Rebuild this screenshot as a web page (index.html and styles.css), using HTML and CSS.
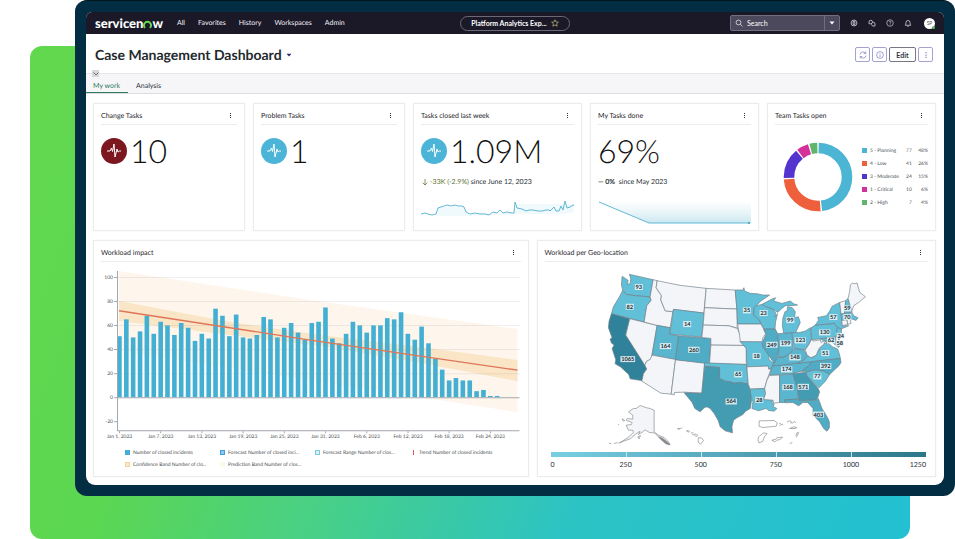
FILE: index.html
```html
<!DOCTYPE html>
<html lang="en">
<head>
<meta charset="utf-8">
<title>Case Management Dashboard</title>
<link rel="stylesheet" href="styles.css">
</head>
<body>
<div class="stage">
<div class="backdrop"></div>
<div class="device">
<div class="screen">

<header class="topbar">
  <div class="topbar-left">
    <a class="logo" href="#" aria-label="servicenow"><span>servicen</span><svg class="logo-o" viewBox="0 0 16 16"><path d="M3.6 14A6.3 6.3 0 1 1 12.400 14" fill="none" stroke="#62d84e" stroke-width="3.600"/></svg><span>w</span></a>
    <nav class="menu">
      <a href="#">All</a><a href="#">Favorites</a><a href="#">History</a><a href="#">Workspaces</a><a href="#">Admin</a>
    </nav>
  </div>
  <button class="pill" type="button">Platform Analytics Exp...
    <svg class="star" viewBox="0 0 16 16"><path d="M8 1.500l2 4.500 4.800.4-3.600 3.200 1.100 4.800L8 11.900l-4.300 2.500 1.100-4.800L1.200 6.400 6 6z" fill="none" stroke="#b9b779" stroke-width="1.500"/></svg>
  </button>
  <div class="topbar-right">
    <div class="search">
      <svg class="i8" viewBox="0 0 16 16"><g fill="none" stroke="#e8e8ee" stroke-width="1.500"><circle cx="7" cy="7" r="4.800"/><path d="M10.500 10.500L15 15"/></g></svg>
      <input type="text" placeholder="Search" aria-label="Search">
      <button type="button" aria-label="Search scope"><svg class="i6" viewBox="0 0 12 12"><path d="M1 3h10L6 9z" fill="#fff"/></svg></button>
    </div>
    <button class="tool" type="button" aria-label="Language"><svg class="i8" viewBox="0 0 16 16"><g fill="none" stroke="#dcdce4" stroke-width="1.300"><circle cx="8" cy="8" r="6"/><path d="M8 2v12M2 8h12M4.500 4q3.500 2 7 0M4.500 12q3.500-2 7 0"/></g></svg></button>
    <button class="tool" type="button" aria-label="Conversations"><svg class="i8" viewBox="0 0 16 16"><g fill="none" stroke="#dcdce4" stroke-width="1.500"><path d="M2 9.500V6a3.500 3.500 0 1 1 3.500 3.500z"/><path d="M9.500 6.500h1a3.500 3.500 0 0 1 3.500 3.500v4h-3.500A3.500 3.500 0 0 1 7 10.500"/></g></svg></button>
    <button class="tool" type="button" aria-label="Help"><svg class="i8" viewBox="0 0 16 16"><g fill="none" stroke="#dcdce4" stroke-width="1.300"><circle cx="8" cy="8" r="6.500"/><path d="M6 6.300a2 2 0 1 1 2.800 1.900Q8 8.600 8 9.500M8 11v1.300"/></g></svg></button>
    <button class="tool" type="button" aria-label="Notifications"><svg class="i8" viewBox="0 0 16 16"><g fill="none" stroke="#dcdce4" stroke-width="1.500"><path d="M2.500 12.500Q4 11 4 7a4 4 0 0 1 8 0q0 4 1.500 5.500z"/><path d="M6.500 14.500h3"/></g></svg></button>
    <button class="avatar" type="button">SP<i></i></button>
  </div>
</header>

<div class="titlebar">
  <h1>Case Management Dashboard</h1>
  <svg class="i6" viewBox="0 0 12 12"><path d="M1 3.500h10L6 9z" fill="#2c2a70"/></svg>
  <div class="actions">
    <button type="button" aria-label="Refresh"><svg class="i8" viewBox="0 0 16 16"><g fill="none" stroke="#7a78c0" stroke-width="1.400"><path d="M2 7a6 6 0 0 1 11-2.500M14 9a6 6 0 0 1-11 2.500"/><path d="M13.500 1v4h-4M2.500 15v-4h4"/></g></svg></button>
    <button type="button" aria-label="Information"><svg class="i8" viewBox="0 0 16 16"><g fill="none" stroke="#7a78c0" stroke-width="1.400"><circle cx="8" cy="8" r="6.800"/><path d="M8 7v5M8 4v1.500"/></g></svg></button>
    <button class="edit" type="button">Edit</button>
    <button type="button" aria-label="More actions"><svg class="i8" viewBox="0 0 16 16"><path d="M7 2h2v2.500H7zM7 6.800h2v2.500H7zM7 11.500h2V14H7z" fill="#6a68b0"/></svg></button>
  </div>
</div>

<nav class="tabs">
  <button class="collapse" type="button" aria-label="Collapse"><svg class="i6" viewBox="0 0 12 12"><path d="M1 3l5 5 5-5" fill="none" stroke="#55555f" stroke-width="1.600"/></svg></button>
  <a class="tab active" href="#">My work</a><a class="tab" href="#">Analysis</a>
</nav>

<main class="board">
  <section class="card">
    <header><h2>Change Tasks</h2><button type="button" aria-label="Options"></button></header>
    <div class="score"><svg class="pulse red" viewBox="0 0 26 26"><circle cx="13" cy="13" r="13"/><path d="M6 13h3l1.500-3 1 3.500L13 6l1 13 2-8 1 3 1.500-1H20"/></svg><span>10</span></div>
  </section>
  <section class="card">
    <header><h2>Problem Tasks</h2><button type="button" aria-label="Options"></button></header>
    <div class="score"><svg class="pulse" viewBox="0 0 26 26"><circle cx="13" cy="13" r="13"/><path d="M6 13h3l1.500-3 1 3.500L13 6l1 13 2-8 1 3 1.500-1H20"/></svg><span>1</span></div>
  </section>
  <section class="card wide">
    <header><h2>Tasks closed last week</h2><button type="button" aria-label="Options"></button></header>
    <div class="score"><svg class="pulse" viewBox="0 0 26 26"><circle cx="13" cy="13" r="13"/><path d="M6 13h3l1.500-3 1 3.500L13 6l1 13 2-8 1 3 1.500-1H20"/></svg><span>1.09M</span></div>
    <p class="delta"><svg class="i8" viewBox="0 0 16 16"><path d="M8 2v12M3.500 9.500L8 14l4.500-4.500" fill="none" stroke="#5d7030" stroke-width="1.500"/></svg><span class="good">-33K (-2.9%)</span> since June 12, 2023</p>
    <svg class="spark" viewBox="0 0 153 26">
      <defs><linearGradient id="fade" x1="0" y1="0" x2="0" y2="1"><stop offset="0" stop-color="#bfe3ee" stop-opacity="0"/><stop offset="1" stop-color="#a9d9e6" stop-opacity=".6"/></linearGradient></defs>
      <path d="M17 8l8-1h18l3 7 46-1 3-9 58 0v8l-10 2H95l-50 2H17z" fill="#d3edf4" opacity=".35"/>
      <path d="M0 14l4-1 3 1 4 1 4-1 2-6 3-1 3-1 3-1 4 1 4-1 3 1 4 0 2 1 2 5 4 2 5-1 5 1 5 0 4 1 4-3 4 1 3-3 3 3 4-1 5 1 2 0 1-11 2 6 5 1 4 2 3-1 4 0 5 1 4 0 4-1 3 0 1 1 4-4 2 4 3 0 2-5 2 4 2-9 2 7 3-1 3-2 4 1 3 1 2 1" fill="none" stroke="#62b8d6"/>
    </svg>
  </section>
  <section class="card wide">
    <header><h2>My Tasks done</h2><button type="button" aria-label="Options"></button></header>
    <div class="score"><span>69%</span></div>
    <p class="delta"><b>— 0%</b>&nbsp; since May 2023</p>
    <svg class="spark" viewBox="0 0 153 26">
      <path d="M0 1h153v22H51z" fill="url(#fade)"/>
      <path d="M1 2l50 21h101" fill="none" stroke="#62b8d6"/><circle cx="151" cy="23" r="1" fill="#3a98bd"/>
    </svg>
  </section>
  <section class="card wide">
    <header><h2>Team Tasks open</h2><button type="button" aria-label="Options"></button></header>
    <div class="team">
      <svg class="donut" viewBox="0 0 70 70" id="donut"></svg>
      <table>
        <tr><th scope="row"><i class="sw c1"></i>5 - Planning</th><td>77</td><td>48%</td></tr>
        <tr><th scope="row"><i class="sw c2"></i>4 - Low</th><td>41</td><td>26%</td></tr>
        <tr><th scope="row"><i class="sw c3"></i>3 - Moderate</th><td>24</td><td>15%</td></tr>
        <tr><th scope="row"><i class="sw c4"></i>1 - Critical</th><td>10</td><td>6%</td></tr>
        <tr><th scope="row"><i class="sw c5"></i>2 - High</th><td>7</td><td>4%</td></tr>
      </table>
    </div>
  </section>
</main>

<div class="board lower">
  <section class="card">
    <header><h2>Workload impact</h2><button type="button" aria-label="Options"></button></header>
    <svg class="chart" viewBox="101 262 419 180">
      <path d="M119 271L310 300L517 329V412L310 380L119 351z" fill="#fef6ed"/>
      <path d="M119 301L230 322L320 335L420 347L517 360V381L420 363L320 346L230 335L119 321z" fill="#fae5c6"/>
      <path d="M117 277.500H520M117 301.500H520M117 325.500H520M117 349.500H520M117 373.500H520" stroke="#00000010"/>
      <g id="bars" fill="#43b0d3"></g>
      <path d="M119 310.700L310 340L517 370" fill="none" stroke="#df7558" stroke-width="1.300"/>
      <path d="M117.500 271V431M114 277.500h3M114 301.500h3M114 325.500h3M114 349.500h3M114 373.500h3M114 397.500H519M114 421.500h3M117 430.500H519" fill="none" stroke="#a3a8ad"/>
      <g id="axis"></g>
    </svg>
    <ul class="legend">
      <li><i class="sw solid"></i>Number of closed incidents</li>
      <li><i class="sw forecast"></i>Forecast Number of closed inci...</li>
      <li><i class="sw range"></i>Forecast Range Number of clos...</li>
      <li><i class="sw trend"></i>Trend Number of closed incidents</li>
      <li><i class="sw confidence"></i>Confidence Band Number of clo...</li>
      <li><i class="sw prediction"></i>Prediction Band Number of clos...</li>
    </ul>
  </section>
  <section class="card">
    <header><h2>Workload per Geo-location</h2><button type="button" aria-label="Options"></button></header>
    <svg class="map" viewBox="-135 -3 1149 555">
      <g id="states" stroke="#6f7f88" stroke-width="2" stroke-linejoin="round"></g>
      <g fill="#fff" stroke="#85888d" stroke-width="2">
        <path fill="#f4f5f9" d="M115 440L130 430 138 430 150 421 170 428 180 430 192 435V500L205 510 222 517 235 530 240 538 228 534 205 514 192 503 178 502 165 494 158 500 145 508 150 498 135 508 122 520 90 532 112 518 130 502 128 495 115 495 108 480 124 478 126 472 108 465 112 460 128 462 128 450z"/>
        <path d="M57 534l6 1M72 535l10-3M84 534l8-2M96 461l8 5-4 2zM84 478h3M143 515l8-4-4 10z"/>
        <path d="M205 515l12 4 18 14 3 6-12-4-16-14z" fill="#85888d"/>
        <path d="M262 491l5-2 2 3zM270 490l6-2M289 497l5-1 4 3-4 2zM302 503h8M306 508l4 1M311 508l7-2 5 5-6 3zM324 518l10 0 6 8-9 11-7-6z"/>
        <path d="M507 467l45-1 9 7-3 10-40 4-12-4zM566 476l5-2M568 482l8-6 2 4M590 471l8-4 6 3M600 473h8l4-4 5 3M598 490l12-5 10 2-5 3zM505 515l15-12 10 2-8 10-4 13-12 5-3-8zM545 525l12-3 4-5 16-1-8 7-10 2-5 5zM617 512l2-8 6-3-3 8-4 8M598 535l8-3"/>
      </g>
      <g id="tags"></g>
    </svg>
    <div class="ramp"><i></i><i></i><i></i><i></i><i></i></div>
    <div class="ramp-labels"><span>0</span><span>250</span><span>500</span><span>750</span><span>1000</span><span>1250</span></div>
  </section>
</div>

</div>
</div>
</div>
<script src="charts.js"></script>
</body>
</html>
```
FILE: styles.css
```css
* { box-sizing: border-box; }
body { margin: 0; background: #fff; color: #2b3238; font: 7px/10px Lato, "Open Sans", sans-serif; text-rendering: geometricPrecision; }
a { color: inherit; text-decoration: none; }
button { font: inherit; color: inherit; background: none; border: 0; padding: 0; display: flex; align-items: center; justify-content: center; }
h1, h2, p, ul { margin: 0; padding: 0; font-weight: 400; }
h2 { font-size: 7px; line-height: 10px; color: #1f262b; }
svg { display: block; flex: none; }
.i8 { width: 8px; height: 8px; }
.i6 { width: 6px; height: 6px; }

.stage { position: relative; min-height: 100vh; padding: 0 0 43px 75px; }
.backdrop { position: absolute; inset: 46px 45px 0 30px; border-radius: 12px; background: linear-gradient(110deg, #62d84e 0%, #5cd751 22%, #48d086 43%, #2cc3c4 67%, #22c0d2 100%); }
.device { position: relative; padding: 11px; border-radius: 12px; background: #032d42; border-top: 1px solid #021620; }
.screen { border-radius: 6px 6px 9px 9px; overflow: hidden; background: #fff; padding-bottom: 8px; }

.topbar { display: grid; grid-template-columns: 1fr auto 1fr; align-items: center; height: 22px; padding: 0 9px; background: #1b1828; color: #f0f0f4; }
.topbar-left, .menu, .topbar-right { display: flex; align-items: center; }
.logo { display: flex; align-items: center; font-size: 13px; line-height: 16px; font-weight: 900; color: #fff; margin-right: 14px; }
.logo-o { width: 9px; height: 9px; margin-top: 3px; }
.menu { gap: 13px; }
.pill { width: 110px; height: 15px; gap: 4px; border: 1px solid #6b6878; border-radius: 8px; font-weight: 700; color: #fff; white-space: nowrap; }
.star { width: 8px; height: 8px; }
.topbar-right { justify-content: flex-end; gap: 10px; }
.search { display: flex; align-items: center; width: 110px; height: 16px; background: #4c495c; border: 1px solid #716e80; border-radius: 2px; padding-left: 4px; }
.search input { flex: 1; min-width: 0; height: 14px; padding: 0 4px; border: 0; background: none; color: #fff; font: inherit; outline: 0; }
.search input::placeholder { color: #fff; opacity: 1; }
.search button { width: 15px; height: 14px; border-left: 1px solid #716e80; }
.avatar { position: relative; width: 11px; height: 11px; margin-left: 2px; border-radius: 50%; background: #fff; color: #555; font-size: 5px; }
.avatar i { position: absolute; right: 0; bottom: 0; width: 3px; height: 3px; border-radius: 50%; background: #5fb85f; }

.titlebar { display: flex; align-items: center; gap: 4px; height: 39px; padding: 2px 11px 0 9px; }
h1 { font-size: 14px; line-height: 20px; font-weight: 700; color: #1f2a2e; }
.actions { display: flex; gap: 2px; margin-left: auto; }
.actions button { width: 15px; height: 15px; border: 1px solid #a3a2d2; border-radius: 2px; }
.actions .edit { width: 27px; border-color: #77777f; font-weight: 700; }

.tabs { position: relative; display: flex; height: 21px; background: #f6f6f9; border-top: 1px solid #e6e6ea; border-bottom: 1px solid #dcdce0; }
.tab { padding: 7px 8px 0 8px; }
.active { padding-left: 7px; color: #2f7d5b; border-bottom: 1px solid #2f7d5b; }
.collapse { position: absolute; left: 6px; top: -4px; width: 7px; height: 7px; background: #d8d8dc; }

.board { display: grid; grid-template-columns: 152fr 152fr 169fr 169fr 169fr; gap: 8px; padding: 9px 8px 0 7px; }
.lower { grid-template-columns: 435fr 399fr; }
.card { min-width: 0; min-height: 128px; padding: 0 7px; background: #fff; border: 1px solid #ececee; box-shadow: 0 0 1px #e4e4e8; }
.card header { display: flex; align-items: center; justify-content: space-between; height: 21px; padding-top: 3px; border-bottom: 1px solid #ececee; }
.card header button { width: 14px; height: 10px; }
.card header button::before { content: ""; width: 1px; height: 1px; background: #33383c; box-shadow: 0 -2px #33383c, 0 2px #33383c; }
.score { display: flex; align-items: center; gap: 3px; height: 26px; margin-top: 13px; font-size: 32px; line-height: 26px; font-weight: 300; color: #111; }
.pulse { width: 26px; height: 26px; fill: #4cb4d6; }
.pulse path { fill: none; stroke: #fff; stroke-width: 1; stroke-linejoin: round; }
.pulse.red { fill: #7c161f; }
.delta { display: flex; align-items: center; height: 10px; margin-top: 13px; white-space: pre; }
.delta .i8 { margin-right: 1px; }
.good { color: #5d7030; }
.spark { width: 100%; margin-top: 13px; }
.team { display: flex; align-items: center; gap: 9px; margin-top: 17px; padding-left: 8px; }
.donut { flex: 0 0 70px; width: 70px; }
table { flex: 1; border-collapse: collapse; font-size: 5px; line-height: 13px; color: #4b4f53; }
th, td { padding: 0; font-weight: 400; text-align: right; white-space: nowrap; }
td + td { padding-left: 4px; }
th { text-align: left; }
.sw { display: inline-block; width: 5px; height: 5px; margin-right: 3px; vertical-align: middle; }
.c1 { background: #4db5d4; } .c2 { background: #ee5f3c; } .c3 { background: #5334cf; } .c4 { background: #d4309b; } .c5 { background: #61b46b; }

.lower .card { min-height: 237px; }
.chart, .map { width: 100%; }
.chart text { font-size: 5px; fill: #4b4f53; }
.legend { display: grid; grid-template-columns: 95px 95px 96px auto; justify-content: start; row-gap: 2px; padding: 6px 0 0 24px; list-style: none; font-size: 5px; color: #4b4f53; white-space: nowrap; }
.solid { background: #43b0d3; }
.forecast { background: #8cc7ee; border: 1px solid #3f9ed8; }
.range { background: #d9f0f7; border: 1px solid #7cc9e2; }
.trend { width: 1px; margin-left: 2px; margin-right: 5px; background: #e05565; }
.confidence { background: #fce9c9; border: 1px solid #f3d49c; }
.prediction { background: #fdf8ea; }
.map { margin-top: 2px; }
.map text { font-size: 17px; font-weight: 700; fill: #1d2b33; text-anchor: middle; }
.ramp { display: grid; grid-template-columns: repeat(5, 1fr); height: 5px; margin: 3px 2px 0 6px; background: linear-gradient(90deg, #78cfe4, #2c7689); }
.ramp i + i { border-left: 1px solid #c5e4ec; }
.ramp-labels { display: flex; padding: 3px 2px 0 6px; text-align: center; }
.ramp-labels span { flex: 2 0 0; }
.ramp-labels span:first-child { flex-grow: 1; text-align: left; }
.ramp-labels span:last-child { flex-grow: 1; text-align: right; }
```
FILE: charts.js
```js
const NS = "http://www.w3.org/2000/svg";
function add(parent, tag, attrs, text) {
  const el = document.createElementNS(NS, tag);
  for (const key in attrs) el.setAttribute(key, attrs[key]);
  if (text !== undefined) el.textContent = text;
  parent.appendChild(el);
}
const byId = id => document.getElementById(id);

// Daily closed incidents
const closed = [51,65,50,55,68,53,63,60,52,62,58,47,53,49,74,68,51,69,50,49,52,67,65,50,58,62,54,48,62,63,75,49,45,53,63,60,54,60,60,66,65,71,53,48,59,45,32,23,14,16,14,14,5,6,1,1];
const step = 6.86;
closed.forEach((v, i) => add(byId("bars"), "rect", {
  x: (117.1 + i * step).toFixed(1), y: (397 - v * 1.195).toFixed(1), width: 4.6, height: (v * 1.195).toFixed(1)
}));
["Jan 1, 2023","Jan 7, 2023","Jan 13, 2023","Jan 19, 2023","Jan 25, 2023","Jan 31, 2023","Feb 6, 2023","Feb 12, 2023","Feb 18, 2023","Feb 24, 2023"].forEach((d, i) => {
  const x = 119.5 + i * step * 6;
  add(byId("axis"), "path", { d: `M${x} 431v2`, stroke: "#a3a8ad" });
  add(byId("axis"), "text", { x, y: 438, "text-anchor": "middle" }, d);
});
[100, 80, 60, 40, 20, 0, -20].forEach((v, i) =>
  add(byId("axis"), "text", { x: 113, y: 279 + i * 24, "text-anchor": "end" }, v));

// Team tasks ring
let offset = 0;
[[48.4, "#4db5d4"], [25.8, "#ee5f3c"], [15.1, "#5334cf"], [6.3, "#d4309b"], [4.4, "#61b46b"]].forEach(([share, color]) => {
  add(byId("donut"), "circle", { cx: 35, cy: 35, r: 29, fill: "none", stroke: color, "stroke-width": 10.6, pathLength: 100,
    "stroke-dasharray": `${share - 0.7} ${100.7 - share}`, "stroke-dashoffset": -offset - 0.35, transform: "rotate(-90 35 35)" });
  offset += share;
});

// State outlines with fill shades
const W = "#f4f5f9", A = "#62bfd8", B = "#5ab6cf", C = "#50abc4", D = "#449cb3", E = "#2f8299";
[
 [A,"96 34 114 46 112 58 120 56 122 42 118 28 189 44 180 95 135 92 108 88 98 76 94 60"],
 [A,"98 76 108 88 135 92 180 96 183 106 170 122 162 171 64 146 70 125 88 95"],
 [E,"64 146 119 161 107 210 164 300 170 312 160 326 158 347 120 341 116 328 105 318 92 306 75 296 77 284 66 250 72 240 64 234 60 222 66 218 55 188 57 168"],
 [W,"119 161 201 181 183 283 170 288 164 300 107 210"],
 [W,"189 44 201 47 198 68 214 92 212 105 225 137 248 140 240 188 201 181 162 171 170 122 183 106 180 95"],
 [W,"201 47 270 61 348 70 341 144 250 133 248 140 225 137 212 105 214 92 198 68"],
 [A,"250 133 341 144 335 216 239 207"],
 [B,"201 181 240 188 238 207 265 212 256 284 186 270"],
 [W,"186 270 256 283 243 387 212 384 155 348 160 326 170 312 164 300 170 288 180 283"],
 [W,"256 283 343 293 335 384 282 381 253 382 252 389 243 387"],
 [C,"265 212 362 220 358 296 256 284"],
 [W,"348 70 435 75 440 132 343 128"],
 [W,"343 128 440 132 441 190 430 186 415 182 339 180"],
 [W,"339 180 415 182 441 190 455 220 460 241 362 240 362 220 335 217"],
 [W,"362 240 462 241 468 250 468 298 358 296"],
 [A,"343 293 468 298 472 330 474 358 450 352 432 354 420 350 405 348 388 340 388 307 343 304"],
 [D,"343 304 388 307 388 340 405 348 420 350 432 354 450 352 475 357 482 385 484 405 480 430 466 438 458 448 440 458 430 465 425 485 427 503 405 497 390 485 384 466 372 445 360 430 350 425 342 428 330 440 314 430 306 412 282 383 335 384"],
 [A,"435 75 458 75 461 68 463 78 480 85 500 86 518 90 538 90 512 108 498 122 492 128 490 150 508 165 512 177 442 177 440 132"],
 [A,"498 122 515 118 525 124 548 132 557 145 553 156 562 146 556 170 554 192 522 192 512 177 508 165 490 150 492 128"],
 [W,"442 177 512 177 520 192 527 205 518 218 515 232 450 230 448 210"],
 [A,"450 230 514 230 520 250 535 268 536 283 550 295 545 310 535 310 534 303 470 305 468 250"],
 [W,"470 305 534 303 535 312 542 312 530 345 523 370 480 372 474 358"],
 [A,"480 372 523 370 526 385 520 403 548 405 545 412 552 417 548 424 560 430 552 438 535 436 528 430 520 432 505 437 485 430 488 410 482 390"],
 [W,"538 330 568 330 568 412 550 414 548 405 520 403 526 385 523 370 530 345"],
 [B,"568 330 608 326 622 372 624 402 583 404 585 412 568 412"],
 [D,"608 326 648 321 650 332 682 368 688 380 682 398 678 405 626 406 622 372"],
 [C,"583 404 624 402 626 406 678 405 684 400 695 430 712 458 717 470 717 488 710 498 700 490 688 470 680 462 668 450 668 430 652 412 638 412 625 422 608 412 585 413"],
 [B,"538 330 546 302 570 300 662 290 658 300 635 318 608 325"],
 [B,"546 302 552 290 560 278 580 276 600 264 612 250 640 254 652 270 642 284 622 294 570 300"],
 [C,"520 192 555 192 562 205 566 250 562 272 552 295 536 272 518 245 516 232 527 208"],
 [B,"563 206 605 202 609 250 600 264 580 276 563 276 566 250"],
 [A,"605 202 628 202 645 198 660 188 664 218 655 238 644 254 612 250"],
 [A,"580 204 576 180 578 158 584 140 590 138 592 125 606 128 615 140 613 158 624 155 630 172 622 190 616 202"],
 [A,"515 118 545 102 556 98 550 108 575 115 600 108 610 116 622 120 600 122 585 122 575 130 562 142 548 132 525 124"],
 [A,"662 188 675 180 733 175 742 188 738 198 745 208 735 216 664 224"],
 [A,"675 180 685 165 682 157 708 152 718 138 725 124 748 112 752 140 754 165 756 182 775 182 752 192 740 186 733 175"],
 [W,"748 112 766 107 764 130 762 146 752 147"],
 [A,"766 107 773 100 780 125 785 140 762 146"],
 [W,"773 100 778 80 780 60 786 54 792 56 800 54 808 82 816 88 825 95 805 112 790 122 784 138"],
 [A,"752 147 785 142 790 152 803 158 797 166 785 162 754 166"],
 [W,"754 166 770 164 772 178 756 182"],
 [W,"770 164 780 163 782 175 772 178"],
 [A,"742 188 753 192 754 210 746 225 738 214 745 208 738 198"],
 [A,"690 222 735 216 740 235 750 240 745 247 735 240 725 230 710 232"],
 [A,"622 294 642 284 652 272 672 276 688 250 700 236 712 232 726 245 742 252 748 270 750 280 662 290"],
 [W,"645 254 656 238 664 222 668 228 690 224 692 232 706 226 700 238 686 250 678 270 662 278 650 270"],
 [C,"662 290 750 280 752 292 744 304 735 312 718 328 700 318 675 314 650 320 635 318 658 300"],
 [A,"648 321 675 314 700 318 718 328 705 348 686 368 650 332"]
].forEach(([fill, points]) => add(byId("states"), "polygon", { points, fill }));

[[146,66,93],[119,125,82],[113,282,1065],[291,177,14],[226,243,164],[311,254,260],[444,328,65],[423,409,564],
 [470,136,35],[520,144,23],[600,165,99],[729,156,57],[771,130,59],[771,156,70],[703,202,130],[722,226,62],[751,212,24],[748,234,58],
 [499,273,18],[545,239,249],[586,235,199],[630,226,123],[705,264,51],[614,277,148],[589,313,174],[706,303,392],[681,334,77],
 [593,366,168],[639,365,571],[507,404,28],[684,448,403]
].forEach(([x, y, n]) => {
  const w = String(n).length * 10 + 4;
  add(byId("tags"), "rect", { x: x - w / 2, y: y - 9, width: w, height: 18, fill: "#eaf5f8", "fill-opacity": 0.85 });
  add(byId("tags"), "text", { x, y: y + 6 }, n);
});
```
